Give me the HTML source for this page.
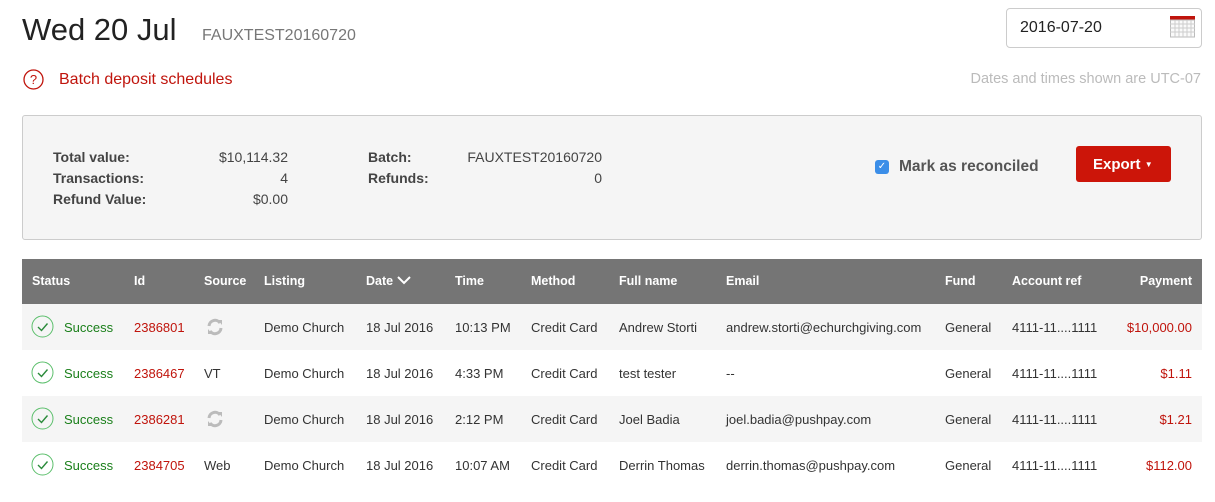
<!DOCTYPE html>
<html><head><meta charset="utf-8"><style>
*{margin:0;padding:0;box-sizing:border-box}
body{width:1215px;height:502px;background:#fff;font-family:"Liberation Sans",Arial,sans-serif;position:relative;overflow:hidden;color:#333}
.a{position:absolute;white-space:nowrap}
.panel{position:absolute;left:22px;top:115px;width:1180px;height:125px;background:#f5f5f5;border:1px solid #ccc;border-radius:3px}
.lbl{font-weight:bold;font-size:14px;color:#444}
.val{font-size:14px;color:#444;text-align:right}
.hdr{position:absolute;left:22px;top:259px;width:1180px;height:45px;background:#757575}
.th{color:#fff;font-size:12.5px;font-weight:bold;top:274px}
.row{position:absolute;left:22px;width:1180px;height:46px}
.td{font-size:13px;color:#333}
.id{color:#c0140c}
.ok{color:#1a7f1a}
.pay{color:#c0140c;text-align:right;right:23px}
</style></head><body>
<div class="a" style="left:22px;top:12px;font-size:31px;color:#222">Wed 20 Jul</div>
<div class="a" style="left:202px;top:27px;font-size:16px;color:#777">FAUXTEST20160720</div>
<svg class="a" style="left:23px;top:69px" width="21" height="21"><circle cx="10.5" cy="10.5" r="9.5" fill="none" stroke="#c0140c" stroke-width="1.3"/><text x="10.5" y="15" font-size="13" text-anchor="middle" fill="#c0140c" font-family="Liberation Sans">?</text></svg>
<div class="a" style="left:59px;top:71px;font-size:16px;color:#c0140c">Batch deposit schedules</div>
<div class="a" style="left:1006px;top:8px;width:196px;height:40px;border:1px solid #ccc;border-radius:4px"></div>
<div class="a" style="left:1020px;top:19px;font-size:16px;color:#222">2016-07-20</div>
<svg class="a" style="left:1170px;top:16px" width="26" height="23"><rect x="0" y="0" width="25" height="4" fill="#c0140c"/><rect x="0.5" y="4" width="24" height="17" fill="#fafafa" stroke="#bbb"/><path d="M5 4v17M9 4v17M13 4v17M17 4v17M21 4v17M0 8h25M0 12h25M0 16h25" stroke="#ccc"/></svg>
<div class="a" style="right:14px;top:71px;font-size:14.5px;color:#bbb">Dates and times shown are UTC-07</div>
<div class="panel"></div>
<div class="a lbl" style="left:53px;top:149px">Total value:</div>
<div class="a lbl" style="left:53px;top:170px">Transactions:</div>
<div class="a lbl" style="left:53px;top:191px">Refund Value:</div>
<div class="a val" style="right:927px;top:149px">$10,114.32</div>
<div class="a val" style="right:927px;top:170px">4</div>
<div class="a val" style="right:927px;top:191px">$0.00</div>
<div class="a lbl" style="left:368px;top:149px">Batch:</div>
<div class="a lbl" style="left:368px;top:170px">Refunds:</div>
<div class="a val" style="right:613px;top:149px">FAUXTEST20160720</div>
<div class="a val" style="right:613px;top:170px">0</div>
<div class="a" style="left:875px;top:160px;width:14px;height:14px;background:#3b8ee8;border-radius:3px;color:#fff;font-size:10px;text-align:center;line-height:14px">✓</div>
<div class="a" style="left:899px;top:158px;font-size:15.5px;font-weight:bold;color:#555">Mark as reconciled</div>
<div class="a" style="left:1076px;top:146px;width:95px;height:36px;background:#cc1509;border-radius:3px;color:#fff;font-weight:bold;font-size:15px;line-height:38px;padding-left:17px">Export <span style="font-size:8px;vertical-align:2px">▼</span></div>
<div class="hdr"></div>
<div class="a th" style="left:32px">Status</div>
<div class="a th" style="left:134px">Id</div>
<div class="a th" style="left:204px">Source</div>
<div class="a th" style="left:264px">Listing</div>
<div class="a th" style="left:366px">Date <svg width="14" height="10" style="vertical-align:0"><path d="M1 2l6 6 6-6" stroke="#fff" stroke-width="2" fill="none"/></svg></div>
<div class="a th" style="left:455px">Time</div>
<div class="a th" style="left:531px">Method</div>
<div class="a th" style="left:619px">Full name</div>
<div class="a th" style="left:726px">Email</div>
<div class="a th" style="left:945px">Fund</div>
<div class="a th" style="left:1012px">Account ref</div>
<div class="a th" style="right:23px">Payment</div>
<div class="row" style="top:304px;background:#f5f5f5"></div>
<div class="row" style="top:396px;background:#f5f5f5"></div>
<div id="rows"></div>
<script>
var d=[["2386801","r","Andrew Storti","andrew.storti@echurchgiving.com","10:13 PM","$10,000.00"],["2386467","VT","test tester","--","4:33 PM","$1.11"],["2386281","r","Joel Badia","joel.badia@pushpay.com","2:12 PM","$1.21"],["2384705","Web","Derrin Thomas","derrin.thomas@pushpay.com","10:07 AM","$112.00"]];
var h="";d.forEach(function(r,i){var t=320+i*46;
h+='<svg class="a" style="left:31px;top:'+(t-5)+'px" width="23" height="23"><circle cx="11.5" cy="11.5" r="10.5" fill="none" stroke="#5cbf6c" stroke-width="1"/><path d="M7 12l3.5 3.5 6-7" fill="none" stroke="#2a8a3a" stroke-width="1.4"/></svg>';
h+='<div class="a td ok" style="left:64px;top:'+t+'px">Success</div><div class="a td id" style="left:134px;top:'+t+'px">'+r[0]+'</div>';
if(r[1]=="r")h+='<svg class="a" style="left:205px;top:'+(t-3)+'px" width="20" height="20"><path d="M4 9a6 6 0 0 1 11-3M16 11a6 6 0 0 1-11 3" fill="none" stroke="#bbb" stroke-width="3"/><path d="M13 3l4 0 0 5z M7 17l-4 0 0-5z" fill="#bbb"/></svg>';else h+='<div class="a td" style="left:204px;top:'+t+'px">'+r[1]+'</div>';
h+='<div class="a td" style="left:264px;top:'+t+'px">Demo Church</div><div class="a td" style="left:366px;top:'+t+'px">18 Jul 2016</div><div class="a td" style="left:455px;top:'+t+'px">'+r[4]+'</div><div class="a td" style="left:531px;top:'+t+'px">Credit Card</div><div class="a td" style="left:619px;top:'+t+'px">'+r[2]+'</div><div class="a td" style="left:726px;top:'+t+'px">'+r[3]+'</div><div class="a td" style="left:945px;top:'+t+'px">General</div><div class="a td" style="left:1012px;top:'+t+'px">4111-11....1111</div><div class="a td pay" style="top:'+t+'px">'+r[5]+'</div>';});
document.getElementById("rows").innerHTML=h;
</script>
</body></html>
